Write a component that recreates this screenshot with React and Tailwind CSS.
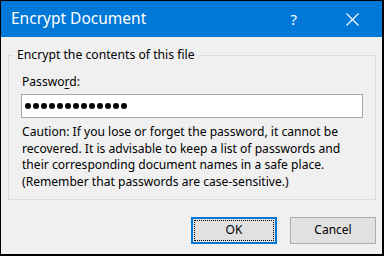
import React from 'react';

const font = { fontFamily: '"Noto Sans", "Open Sans", sans-serif' };

const cautionLines = [
  'Caution: If you lose or forget the password, it cannot be',
  'recovered. It is advisable to keep a list of passwords and',
  'their corresponding document names in a safe place.',
  '(Remember that passwords are case-sensitive.)',
];

export default function App() {
  return (
    <div
      className="w-[384px] h-[256px] flex flex-col border-l border-t border-r-2 border-b-2 border-black bg-[#f0f0f0] text-[#000]"
      style={font}
    >
      {/* Title bar */}
      <div className="h-[36px] flex items-center bg-[#0078d7] text-white pl-[10px] pr-[23px]">
        <span className="text-[15.5px] leading-none">Encrypt Document</span>
        <span className="flex-1" />
        <span className="text-[15px] leading-none">?</span>
        <svg className="ml-[49px]" width="13" height="13" viewBox="0 0 13 13">
          <path d="M0.5 0.5 L12.5 12.5 M12.5 0.5 L0.5 12.5" stroke="#fff" strokeWidth="1.1" fill="none" />
        </svg>
      </div>

      {/* Body */}
      <div className="flex-1 flex flex-col pt-[10px] pl-[7px] pr-[6px]">
        <fieldset className="border border-[#dcdcdc] p-0 m-0 min-w-0">
          <legend className="ml-[4px] px-[4px] text-[12.2px] leading-[16px]">
            Encrypt the contents of this file
          </legend>
          <div className="flex flex-col px-[12px] pt-[11px] pb-[8px]">
            <label className="pl-px text-[12.1px] leading-[16px]">
              Passwo<span className="underline underline-offset-2">r</span>d:
            </label>
            <div className="mt-[4px] h-[24px] bg-white border border-[#a9a9a9] flex items-center pl-[3px] gap-[2px]">
              {Array.from({ length: 13 }).map((_, i) => (
                <span key={i} className="w-[6px] h-[6px] rounded-full bg-black" />
              ))}
            </div>
            <div className="mt-[6px] pl-px text-[12.1px] leading-[16.67px] whitespace-nowrap">
              {cautionLines.map((l) => (
                <div key={l}>{l}</div>
              ))}
            </div>
          </div>
        </fieldset>

        {/* Buttons */}
        <div className="mt-[17px] flex justify-end gap-[13px]">
          <button className="w-[86px] h-[27px] bg-[#e1e1e1] border-2 border-[#0078d7] p-px text-[12px]">
            <div className="w-full h-full border border-dotted border-black flex items-center justify-center">
              OK
            </div>
          </button>
          <button className="w-[86px] h-[27px] bg-[#e1e1e1] border border-[#adadad] text-[12px] flex items-center justify-center">
            Cancel
          </button>
        </div>
      </div>
    </div>
  );
}
